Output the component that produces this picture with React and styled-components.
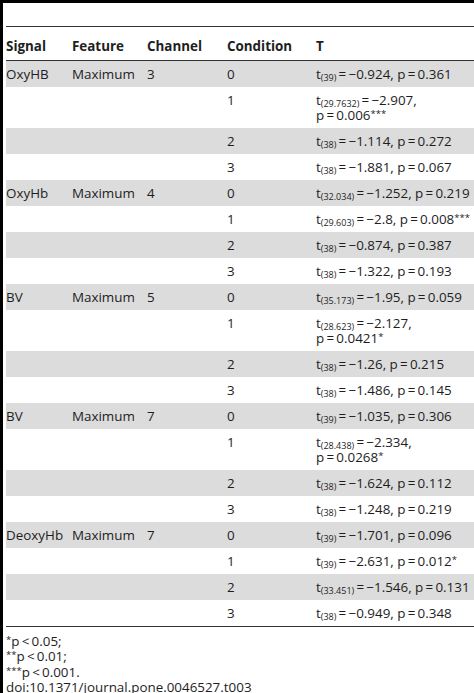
import React from "react";
import styled, { createGlobalStyle } from "styled-components";

const GlobalStyle = createGlobalStyle`
  html, body { margin: 0; padding: 0; background: #fff; }
  body {
    font-family: "Open Sans", "Noto Sans", sans-serif;
    color: #1e1e1e;
    -webkit-font-smoothing: antialiased;
  }
`;

const Page = styled.div`
  width: 474px;
  height: 693px;
  box-sizing: border-box;
  border-left: 3px solid #000;
  overflow: hidden;
`;

const TopBar = styled.div`
  height: 3px;
  background: #000;
  margin-left: -3px;
`;

const Table = styled.div`
  margin-top: 23px;
  margin-left: 3px;
  border-top: 1px solid #333;
  border-bottom: 1px solid #333;
  font-size: 13.4px;
  line-height: 15px;
`;

const Grid = styled.div`
  display: grid;
  grid-template-columns: 66px 75px 80px 89px 1fr;
  align-items: start;
`;

const HeaderRow = styled(Grid)`
  font-weight: 700;
  padding: 12px 0 6px;
  border-bottom: 1px solid #333;
`;

const Row = styled(Grid)`
  background: ${(p) => (p.$shade ? "#dcdcdc" : "#fff")};
  padding: 5.5px 0;
`;

const Cell = styled.div`
  white-space: nowrap;
`;

const Sub = styled.sub`
  font-size: 9px;
  vertical-align: -2px;
  line-height: 0;
`;

const Star = styled.sup`
  font-size: 9.5px;
  vertical-align: 3px;
  line-height: 0;
`;

const Notes = styled.div`
  margin-left: 3px;
  padding-top: 7px;
  font-size: 13.4px;
  line-height: 15.4px;
`;

const Note = styled.div``;

const PValue = ({ p, stars }) => (
  <>
    p{"\u2009=\u2009"}
    {p}
    {stars && <Star>{stars}</Star>}
  </>
);

const TStat = ({ df, t, p, stars, wrap }) => (
  <>
    <div>
      t<Sub>({df})</Sub>
      {"\u2009=\u2009\u2212"}
      {t},
      {!wrap && (
        <>
          {" "}
          <PValue p={p} stars={stars} />
        </>
      )}
    </div>
    {wrap && (
      <div>
        <PValue p={p} stars={stars} />
      </div>
    )}
  </>
);

const groups = [
  {
    signal: "OxyHB",
    channel: "3",
    rows: [
      { df: "39", t: "0.924", p: "0.361" },
      { df: "29.7632", t: "2.907", p: "0.006", stars: "***", wrap: true },
      { df: "38", t: "1.114", p: "0.272" },
      { df: "38", t: "1.881", p: "0.067" },
    ],
  },
  {
    signal: "OxyHb",
    channel: "4",
    rows: [
      { df: "32.034", t: "1.252", p: "0.219" },
      { df: "29.603", t: "2.8", p: "0.008", stars: "***" },
      { df: "38", t: "0.874", p: "0.387" },
      { df: "38", t: "1.322", p: "0.193" },
    ],
  },
  {
    signal: "BV",
    channel: "5",
    rows: [
      { df: "35.173", t: "1.95", p: "0.059" },
      { df: "28.623", t: "2.127", p: "0.0421", stars: "*", wrap: true },
      { df: "38", t: "1.26", p: "0.215" },
      { df: "38", t: "1.486", p: "0.145" },
    ],
  },
  {
    signal: "BV",
    channel: "7",
    rows: [
      { df: "39", t: "1.035", p: "0.306" },
      { df: "28.438", t: "2.334", p: "0.0268", stars: "*", wrap: true },
      { df: "38", t: "1.624", p: "0.112" },
      { df: "38", t: "1.248", p: "0.219" },
    ],
  },
  {
    signal: "DeoxyHb",
    channel: "7",
    rows: [
      { df: "39", t: "1.701", p: "0.096" },
      { df: "39", t: "2.631", p: "0.012", stars: "*" },
      { df: "33.451", t: "1.546", p: "0.131" },
      { df: "38", t: "0.949", p: "0.348" },
    ],
  },
];

export default function App() {
  return (
    <>
      <GlobalStyle />
      <Page>
        <TopBar />
        <Table>
          <HeaderRow>
            <Cell>Signal</Cell>
            <Cell>Feature</Cell>
            <Cell>Channel</Cell>
            <Cell>Condition</Cell>
            <Cell>T</Cell>
          </HeaderRow>
          {groups.map((g, gi) =>
            g.rows.map((r, ri) => (
              <Row key={`${gi}-${ri}`} $shade={ri % 2 === 0}>
                <Cell>{ri === 0 ? g.signal : ""}</Cell>
                <Cell>{ri === 0 ? "Maximum" : ""}</Cell>
                <Cell>{ri === 0 ? g.channel : ""}</Cell>
                <Cell>{ri}</Cell>
                <Cell>
                  <TStat {...r} />
                </Cell>
              </Row>
            ))
          )}
        </Table>
        <Notes>
          <Note>
            <Star>*</Star>p{"\u2009<\u2009"}0.05;
          </Note>
          <Note>
            <Star>**</Star>p{"\u2009<\u2009"}0.01;
          </Note>
          <Note>
            <Star>***</Star>p{"\u2009<\u2009"}0.001.
          </Note>
          <Note>doi:10.1371/journal.pone.0046527.t003</Note>
        </Notes>
      </Page>
    </>
  );
}
